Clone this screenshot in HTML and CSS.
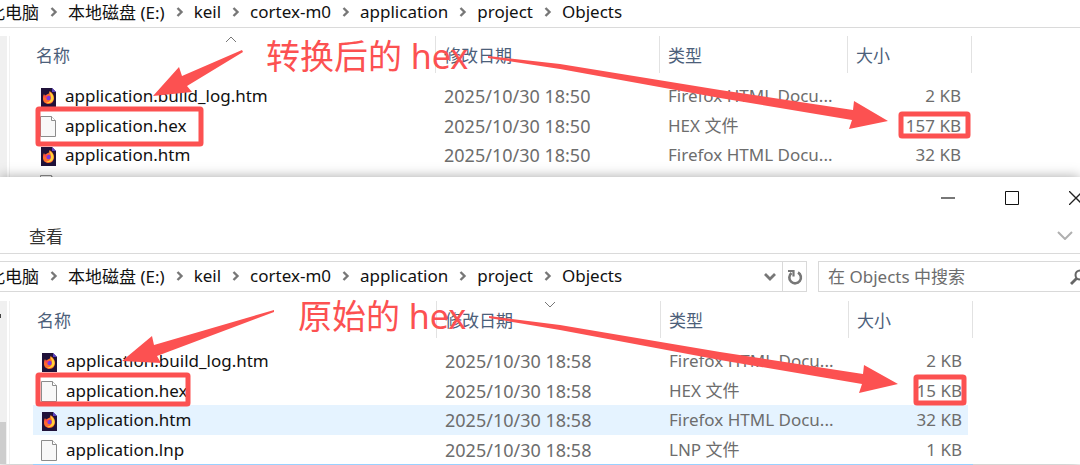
FILE: index.html
```html
<!DOCTYPE html>
<html lang="zh-CN">
<head>
    <meta charset="UTF-8">
    <meta name="viewport" content="width=device-width, initial-scale=1.0">
    <title>Objects</title>
    <link rel="stylesheet" href="styles.css">
</head>
<body>
    <svg class="symbols" width="0" height="0" aria-hidden="true">
        <symbol id="icon-file" viewBox="0 0 16 21">
            <path d="M.5.5h11l4 4v16H.5z" fill="#f8f8f8" stroke="#8c8c8c"/>
            <path d="M11.500.5v4h4" fill="#fff" stroke="#8c8c8c"/>
        </symbol>
        <symbol id="icon-firefox" viewBox="0 0 16 19">
            <path d="M1 0h11l4 4v15H1z" fill="#20123a"/>
            <path d="M12 0v4h4z" fill="#5a3fc0"/>
            <path d="M8 6c2-1 2-2 1-3 3 1 5 4 5 7s-2 6-5.500 6S3 13.500 3 11c0-2 0-3 1-5l1 2c1-1 2-2 3-2z" fill="#ff6a2b"/>
            <path d="M9 3.500c3 2 5 4 4.500 7.500s-5 5-8 3c3 1 5.500-1 5.500-4 0-3-1-4-2-6.500z" fill="#ffd43a"/>
            <circle cx="8.500" cy="10" r="2.200" fill="#7a3be0"/>
            <path d="M4 8c2-1 3 0 4 1-2 0-2 1-3 1z" fill="#ff4050"/>
        </symbol>
        <symbol id="icon-sep" viewBox="0 0 8 12">
            <path d="M2 2l4 4-4 4" fill="none" stroke="#777" stroke-width="2.400"/>
        </symbol>
    </svg>

    <main class="screen">
        <section class="window">
            <nav class="path path-plain" aria-label="路径">
                <a href="#">此电脑</a>
                <svg class="sep"><use href="#icon-sep"/></svg>
                <a href="#">本地磁盘 (E:)</a>
                <svg class="sep"><use href="#icon-sep"/></svg>
                <a href="#">keil</a>
                <svg class="sep"><use href="#icon-sep"/></svg>
                <a href="#">cortex-m0</a>
                <svg class="sep"><use href="#icon-sep"/></svg>
                <a href="#">application</a>
                <svg class="sep"><use href="#icon-sep"/></svg>
                <a href="#">project</a>
                <svg class="sep"><use href="#icon-sep"/></svg>
                <a href="#">Objects</a>
            </nav>
            <div class="content">
                <div class="sidebar"></div>
                <table class="files">
                    <colgroup>
                        <col class="col-name">
                        <col class="col-date">
                        <col class="col-type">
                        <col class="col-size">
                    </colgroup>
                    <thead>
                        <tr>
                            <th>名称<svg class="sort" viewBox="0 0 12 7"><path d="M1 6l5-5 5 5"/></svg></th>
                            <th>修改日期</th>
                            <th>类型</th>
                            <th>大小</th>
                        </tr>
                    </thead>
                    <tbody>
                        <tr>
                            <td><svg class="icon"><use href="#icon-firefox"/></svg>application.build_log.htm</td>
                            <td class="date">2025/10/30 18:50</td>
                            <td>Firefox HTML Docu...</td>
                            <td>2 KB</td>
                        </tr>
                        <tr>
                            <td><svg class="icon"><use href="#icon-file"/></svg>application.hex</td>
                            <td class="date">2025/10/30 18:50</td>
                            <td>HEX 文件</td>
                            <td>157 KB</td>
                        </tr>
                        <tr>
                            <td><svg class="icon"><use href="#icon-firefox"/></svg>application.htm</td>
                            <td class="date">2025/10/30 18:50</td>
                            <td>Firefox HTML Docu...</td>
                            <td>32 KB</td>
                        </tr>
                        <tr>
                            <td><svg class="icon"><use href="#icon-file"/></svg></td>
                            <td></td>
                            <td></td>
                            <td></td>
                        </tr>
                    </tbody>
                </table>
            </div>
        </section>

        <section class="window window-front">
            <header class="titlebar">
                <button class="caption" aria-label="最小化"><svg width="14" height="14"><path d="M0 7h14" stroke="#777" stroke-width="2"/></svg></button>
                <button class="caption" aria-label="最大化"><svg width="14" height="14"><path d="M.5.5h13v13H.5z" fill="none" stroke="#111"/></svg></button>
                <button class="caption" aria-label="关闭"><svg width="14" height="14"><path d="M0 0l14 14M14 0L0 14" stroke="#222" stroke-width="1.300"/></svg></button>
            </header>
            <div class="ribbon">
                <button class="tab">查看</button>
                <button class="expand" aria-label="展开功能区"><svg width="16" height="9"><path d="M1 1l7 7 7-7" fill="none" stroke="#b0b0b0" stroke-width="2"/></svg></button>
            </div>
            <div class="toolbar">
                <div class="address">
                    <nav class="path" aria-label="路径">
                        <a href="#">此电脑</a>
                        <svg class="sep"><use href="#icon-sep"/></svg>
                        <a href="#">本地磁盘 (E:)</a>
                        <svg class="sep"><use href="#icon-sep"/></svg>
                        <a href="#">keil</a>
                        <svg class="sep"><use href="#icon-sep"/></svg>
                        <a href="#">cortex-m0</a>
                        <svg class="sep"><use href="#icon-sep"/></svg>
                        <a href="#">application</a>
                        <svg class="sep"><use href="#icon-sep"/></svg>
                        <a href="#">project</a>
                        <svg class="sep"><use href="#icon-sep"/></svg>
                        <a href="#">Objects</a>
                    </nav>
                    <button class="history" aria-label="历史记录"><svg width="14" height="10"><path d="M2 2l5 5 5-5" fill="none" stroke="#777" stroke-width="2.800"/></svg></button>
                    <button class="refresh" aria-label="刷新"><svg width="16" height="16" viewBox="0 0 16 16"><path d="M11 3.500A5.800 5.800 0 1 1 4.500 4" fill="none" stroke="#777" stroke-width="2.600"/><path d="M1 2h5.500v5.500" fill="none" stroke="#777" stroke-width="2.200"/></svg></button>
                </div>
                <div class="search">
                    <input type="search" placeholder="在 Objects 中搜索" aria-label="在 Objects 中搜索">
                    <svg width="16" height="16"><circle cx="10" cy="6" r="4.500" fill="none" stroke="#666" stroke-width="2"/><path d="M7 9l-6 6" stroke="#666" stroke-width="2.800"/></svg>
                </div>
            </div>
            <div class="content">
                <div class="sidebar">
                    <div class="pin"></div>
                    <div class="thumb"></div>
                </div>
                <table class="files">
                    <colgroup>
                        <col class="col-name">
                        <col class="col-date">
                        <col class="col-type">
                        <col class="col-size">
                    </colgroup>
                    <thead>
                        <tr>
                            <th>名称</th>
                            <th>修改日期<svg class="sort" viewBox="0 0 12 7"><path d="M1 1l5 5 5-5"/></svg></th>
                            <th>类型</th>
                            <th>大小</th>
                        </tr>
                    </thead>
                    <tbody>
                        <tr>
                            <td><svg class="icon"><use href="#icon-firefox"/></svg>application.build_log.htm</td>
                            <td class="date">2025/10/30 18:58</td>
                            <td>Firefox HTML Docu...</td>
                            <td>2 KB</td>
                        </tr>
                        <tr>
                            <td><svg class="icon"><use href="#icon-file"/></svg>application.hex</td>
                            <td class="date">2025/10/30 18:58</td>
                            <td>HEX 文件</td>
                            <td>15 KB</td>
                        </tr>
                        <tr class="hover">
                            <td><svg class="icon"><use href="#icon-firefox"/></svg>application.htm</td>
                            <td class="date">2025/10/30 18:58</td>
                            <td>Firefox HTML Docu...</td>
                            <td>32 KB</td>
                        </tr>
                        <tr class="last">
                            <td><svg class="icon"><use href="#icon-file"/></svg>application.lnp</td>
                            <td class="date">2025/10/30 18:58</td>
                            <td>LNP 文件</td>
                            <td>1 KB</td>
                        </tr>
                    </tbody>
                </table>
            </div>
        </section>

        <!-- red marks over both windows -->
        <svg class="marks" width="1080" height="465" viewBox="0 0 1080 465">
            <g class="box">
                <rect x="38" y="109" width="163" height="35" rx="1"/>
                <rect x="901" y="114" width="67" height="22" rx="1"/>
                <rect x="38" y="375" width="150" height="29" rx="1"/>
                <rect x="916" y="377" width="48" height="26" rx="1"/>
            </g>
            <g class="arrow">
                <path d="M153 96L179 67L182 76L242 50L243 52L187 86L192 92z"/>
                <path d="M488 56L560 64L720 90L853 110L854 101L888 121L849 129L852 120L720 98L560 69L488 58z"/>
                <path d="M122 361L152 336L154 345L274 310L274 312L157 356L161 363z"/>
                <path d="M489 316L560 325L720 352L863 374L864 365L898 384L859 393L862 384L720 360L560 330L489 318z"/>
            </g>
            <text x="266" y="69">转换后的 hex</text>
            <text x="298" y="329">原始的 hex</text>
        </svg>
    </main>
</body>
</html>
```
FILE: styles.css
```css
* {
    box-sizing: border-box;
}
body {
    margin: 0;
    background: #fff;
    color: #111;
    font-family: "Noto Sans", "Noto Sans CJK SC", sans-serif;
    font-size: 17px;
    overflow: hidden;
}
button {
    display: flex;
    align-items: center;
    justify-content: center;
    padding: 0;
    border: none;
    background: none;
    color: inherit;
    font: inherit;
    cursor: pointer;
}
.symbols {
    position: absolute;
}
.screen {
    position: relative;
    min-height: 100vh;
    overflow: hidden;
}

/* windows */
.window {
    background: #fff;
}
.window-front {
    position: relative;
    margin-top: -22px;
    box-shadow: 0 0 12px rgba(0, 0, 0, 0.35);
}
.titlebar {
    display: flex;
    justify-content: flex-end;
    margin-right: -28px;
    height: 42px;
}
.caption {
    width: 64px;
}
.ribbon {
    display: flex;
    align-items: center;
    justify-content: space-between;
    height: 35px;
    padding: 0 7px 2px 29px;
    border-bottom: 1px solid #dadada;
    color: #333;
}

/* address bar */
.path {
    display: flex;
    align-items: center;
    flex: 1;
    gap: 10px;
    margin-left: -12px;
    padding-bottom: 2px;
    white-space: nowrap;
}
.path a {
    color: #111;
    text-decoration: none;
}
.path-plain {
    height: 28px;
    padding-bottom: 4px;
    border-bottom: 1px solid #dadada;
}
.sep {
    flex: none;
    width: 9px;
    height: 12px;
}
.toolbar {
    display: flex;
    gap: 11px;
    margin-right: -12px;
    padding: 7px 0 9px;
}
.address {
    display: flex;
    flex: 1;
    height: 31px;
    border: 1px solid #d9d9d9;
    border-left: none;
}
.history {
    width: 24px;
}
.refresh {
    width: 24px;
    border-left: 1px solid #d9d9d9;
}
.search {
    display: flex;
    align-items: center;
    width: 274px;
    height: 31px;
    padding: 0 5px 0 9px;
    border: 1px solid #d9d9d9;
}
.search input {
    flex: 1;
    min-width: 0;
    padding: 0;
    border: none;
    outline: none;
    background: none;
    font: inherit;
}
.search input::placeholder {
    color: #6d6d6d;
}

/* file list */
.content {
    display: flex;
    gap: 22px;
}
.window-front .content {
    gap: 23px;
}
.path-plain + .content {
    padding-top: 8px;
}
.sidebar {
    display: flex;
    flex-direction: column;
    justify-content: space-between;
    flex: none;
    width: 10px;
    border-right: 1px solid #f0f0f0;
    background: linear-gradient(to right, #f0f0f0 7px, #fff 7px);
}
.pin {
    width: 1px;
    height: 4px;
    margin-top: 13px;
    background: #444;
}
.thumb {
    width: 6px;
    height: 42px;
    background: #cdcdcd;
}
.files {
    width: 940px;
    table-layout: fixed;
    border-collapse: separate;
    border-spacing: 0;
}
.col-name {
    width: 404px;
}
.col-date {
    width: 224px;
}
.col-type {
    width: 188px;
}
.files th {
    position: relative;
    height: 37px;
    padding: 0 8px;
    border-right: 1px solid #e2e2e2;
    color: #4c607a;
    font-weight: normal;
    text-align: left;
}
.files th:first-child {
    padding-left: 4px;
}
.sort {
    position: absolute;
    top: 0;
    left: 48%;
    width: 12px;
    height: 7px;
    fill: none;
    stroke: #777;
}
.files tbody::before {
    content: "";
    display: block;
    height: 8px;
}
.files td {
    height: 30px;
    padding: 0 8px;
    color: #6d6d6d;
    line-height: 24px;
    white-space: nowrap;
}
.files tr:nth-child(even) td {
    height: 29px;
}
.files td:first-child {
    color: #111;
}
.files .date {
    font-size: 18px;
}
.files td:last-child {
    padding-right: 6px;
    border-right: 5px solid #fff;
    background-clip: padding-box;
    text-align: right;
}
.files .hover td {
    background-color: #e5f3ff;
}
.files .last td {
    box-shadow: 0 1px #99d1ff;
}
.icon {
    width: 16px;
    height: 21px;
    margin-right: 9px;
    vertical-align: middle;
}

/* marks */
.marks {
    position: absolute;
    top: 0;
    left: 0;
    pointer-events: none;
}
.marks .box {
    fill: none;
    stroke: #fc5151;
    stroke-width: 5px;
}
.marks .arrow,
.marks text {
    fill: #fc5151;
}
.marks text {
    font-size: 34px;
}
```
